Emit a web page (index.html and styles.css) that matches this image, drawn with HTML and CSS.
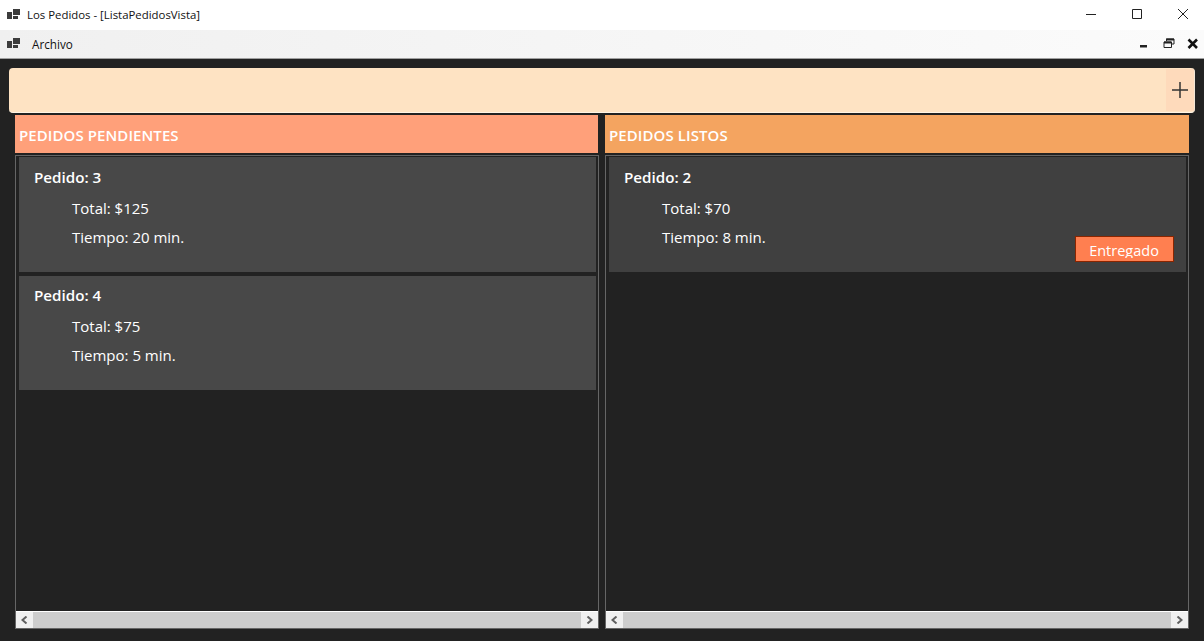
FILE: index.html
```html
<!DOCTYPE html>
<html lang="es">
<head>
<meta charset="utf-8">
<title>Los Pedidos - [ListaPedidosVista]</title>
<link rel="stylesheet" href="styles.css">
</head>
<body>
<div class="app">
  <header class="titlebar">
    <svg class="appicon" width="14" height="12" viewBox="0 0 14 12"><path d="M0 4h5v7H0zM6 1h7v6H6zM6 8h5v3H6z" fill="#3c3c3c"/></svg>
    <span class="title">Los Pedidos - [ListaPedidosVista]</span>
    <div class="winbtns">
      <svg width="12" height="12" viewBox="0 0 12 12"><path d="M1 6.5h10" stroke="#222" fill="none"/></svg>
      <svg width="12" height="12" viewBox="0 0 12 12"><path d="M1.5 1.5h9v9h-9z" stroke="#222" fill="none"/></svg>
      <svg width="12" height="12" viewBox="0 0 12 12"><path d="M1 1l10 10M11 1L1 11" stroke="#222" fill="none"/></svg>
    </div>
  </header>
  <nav class="menubar">
    <svg class="appicon" width="14" height="12" viewBox="0 0 14 12"><path d="M0 4h5v7H0zM6 1h7v6H6zM6 8h5v3H6z" fill="#3c3c3c"/></svg>
    <span class="menuitem">Archivo</span>
    <div class="mdibtns">
      <svg class="mdimin" width="10" height="10" viewBox="0 0 10 10"><path d="M1 6h7v2.500H1z" fill="#222"/></svg>
      <svg width="12" height="12" viewBox="0 0 12 12"><path d="M3.500 3V1h7.500v5H8.500M1 4h7.500v5.500H1z" stroke="#222" stroke-width="1" fill="none"/><path d="M3 1.500h8M1 4.500h7.500" stroke="#222" stroke-width="2" fill="none"/></svg>
      <svg width="12" height="12" viewBox="0 0 12 12"><path d="M1.500 1.500l8.500 8.500M10 1.500L1.500 10" stroke="#111" stroke-width="2.600" fill="none"/></svg>
    </div>
  </nav>
  <main class="content">
    <div class="toolbar">
      <button class="addbtn"><svg width="16" height="16" viewBox="0 0 16 16"><path d="M8 0v16M0 8h16" stroke="#333" stroke-width="1.500" fill="none"/></svg></button>
    </div>
    <div class="columns">
      <section class="column">
        <h2 class="colhead salmon">PEDIDOS PENDIENTES</h2>
        <div class="panel">
          <div class="list">
            <article class="card">
              <div class="cardtitle">Pedido: 3</div>
              <div class="line first">Total: $125</div>
              <div class="line">Tiempo: 20 min.</div>
            </article>
            <article class="card">
              <div class="cardtitle">Pedido: 4</div>
              <div class="line first">Total: $75</div>
              <div class="line">Tiempo: 5 min.</div>
            </article>
          </div>
          <div class="hscroll">
            <span class="arrow"><svg width="7" height="8" viewBox="0 0 7 8"><path d="M5.500 .5L1.500 4l4 3.500" stroke="#606060" stroke-width="2" fill="none"/></svg></span>
            <span class="track"></span>
            <span class="arrow"><svg width="7" height="8" viewBox="0 0 7 8"><path d="M1.500 .5L5.500 4l-4 3.500" stroke="#606060" stroke-width="2" fill="none"/></svg></span>
          </div>
        </div>
      </section>
      <section class="column">
        <h2 class="colhead sandy">PEDIDOS LISTOS</h2>
        <div class="panel">
          <div class="list">
            <article class="card done">
              <div class="cardtitle">Pedido: 2</div>
              <div class="line first">Total: $70</div>
              <div class="line">Tiempo: 8 min.</div>
              <button class="deliver"><span>Entregado</span></button>
            </article>
          </div>
          <div class="hscroll">
            <span class="arrow"><svg width="7" height="8" viewBox="0 0 7 8"><path d="M5.500 .5L1.500 4l4 3.500" stroke="#606060" stroke-width="2" fill="none"/></svg></span>
            <span class="track"></span>
            <span class="arrow"><svg width="7" height="8" viewBox="0 0 7 8"><path d="M1.500 .5L5.500 4l-4 3.500" stroke="#606060" stroke-width="2" fill="none"/></svg></span>
          </div>
        </div>
      </section>
    </div>
  </main>
</div>
</body>
</html>
```
FILE: styles.css
```css
* { box-sizing: border-box; }
html, body { margin: 0; padding: 0; height: 100%; overflow: hidden; }
body { font-family: "Open Sans", "Noto Sans", sans-serif; background: #222; }
.app { width: 1204px; height: 641px; display: flex; flex-direction: column; }

.titlebar { height: 30px; background: #fff; display: flex; align-items: center; padding-left: 7px; color: #111; }
.appicon { flex: none; margin-top: -2px; }
.title { font-size: 11.4px; margin-left: 6px; margin-top: -1px; }
.winbtns { margin-left: auto; display: flex; gap: 34px; padding-right: 15px; margin-top: -2px; }
.winbtns svg { display: block; }

.menubar { height: 29px; background: linear-gradient(90deg, #f0f0f0 0%, #fbfbfb 100%); border-bottom: 1px solid #a0a0a0; display: flex; align-items: center; padding-left: 7px; color: #111; }
.menuitem { font-size: 11.7px; margin-left: 11px; margin-top: -1px; }
.mdibtns { margin-left: auto; display: flex; align-items: center; gap: 12px; padding-right: 5px; }
.mdibtns svg { display: block; }
.mdimin { margin-right: 2px; }

.content { flex: 1; display: flex; flex-direction: column; padding-top: 9px; }
.toolbar { height: 45px; margin: 0 9px 2px; background: #fee3c3; border-radius: 4px; display: flex; justify-content: flex-end; border-bottom: 1px solid #fff4e4; border-right: 1px solid #f2e6d6; }
.addbtn { width: 28px; height: 42px; margin-top: 1px; padding: 0; border: 0; background: #fedabb; display: flex; align-items: center; justify-content: center; }

.columns { flex: 1; display: flex; gap: 6px; padding: 0 15px 12px; min-height: 0; }
.column { width: 584px; display: flex; flex-direction: column; }
.colhead { margin: 0; height: 38px; line-height: 41px; padding-left: 4px; font-size: 15px; font-weight: 600; letter-spacing: .08px; color: #fff; }
.salmon { background: #ffa07a; margin-right: 1px; }
.sandy { background: #f4a460; }

.panel { flex: 1; margin-top: 2px; border: 1px solid #666; display: flex; flex-direction: column; min-height: 0; }
.list { flex: 1; padding: 1px 2px 0 3px; display: flex; flex-direction: column; gap: 4px; }
.card { position: relative; height: 115px; background: #484848; color: #fff; padding: 10px 0 0 15px; }
.card + .card { height: 114px; padding-top: 9px; }
.done { background: #404040; }
.cardtitle { font-size: 15.2px; font-weight: 600; line-height: 20px; }
.line { font-size: 15px; line-height: 20px; margin-left: 38px; margin-top: 9px; }
.line.first { margin-top: 11px; }

.deliver { position: absolute; right: 12px; top: 79px; width: 99px; height: 26px; padding: 0 1px 0 0; display: flex; align-items: flex-start; justify-content: center; background: #ff7f50; border: 1px solid #8b2500; color: #fff; font: 14.5px "Open Sans", "Noto Sans", sans-serif; }
.deliver span { display: block; height: 21px; line-height: 27px; overflow: hidden; }

.hscroll { height: 17px; border-top: 1px solid #fff; background: #f0f0f0; display: flex; flex: none; }
.arrow { width: 17px; display: flex; align-items: center; justify-content: center; }
.track { flex: 1; background: #cdcdcd; }
```
